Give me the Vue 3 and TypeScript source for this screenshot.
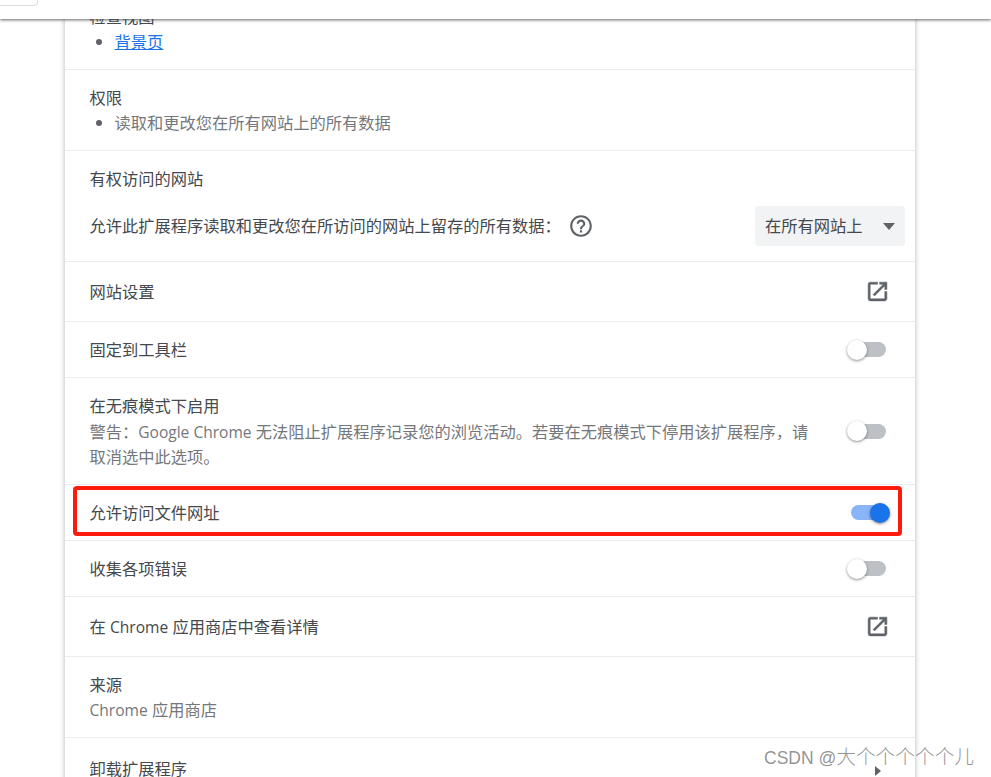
<script setup lang="ts">
interface ToggleRow { label: string; on: boolean }
const pinRow: ToggleRow = { label: '固定到工具栏', on: false }
const fileRow: ToggleRow = { label: '允许访问文件网址', on: true }
const errorRow: ToggleRow = { label: '收集各项错误', on: false }
</script>

<template>
  <div class="page">
    <header class="topbar"><div class="search-stub"></div></header>
    <main class="card">
      <section class="row block first">
        <div class="title">检查视图</div>
        <ul><li><a href="#">背景页</a></li></ul>
      </section>
      <section class="row block perms">
        <div class="title">权限</div>
        <ul><li>读取和更改您在所有网站上的所有数据</li></ul>
      </section>
      <section class="row access">
        <div class="title">有权访问的网站</div>
        <div class="access-line">
          <span class="title grow">允许此扩展程序读取和更改您在所访问的网站上留存的所有数据：</span>
          <svg class="help" viewBox="0 0 24 24">
            <path fill="#5f6368" d="M11 18h2v-2h-2v2zm1-16C6.48 2 2 6.48 2 12s4.48 10 10 10 10-4.48 10-10S17.52 2 12 2zm0 18c-4.41 0-8-3.59-8-8s3.59-8 8-8 8 3.59 8 8-3.59 8-8 8zm0-14c-2.21 0-4 1.79-4 4h2c0-1.1.9-2 2-2s2 .9 2 2c0 2-3 1.75-3 5h2c0-2.25 3-2.5 3-5 0-2.21-1.79-4-4-4z"/>
          </svg>
          <div class="select"><span>在所有网站上</span><i class="caret"></i></div>
        </div>
      </section>
      <section class="row line tall">
        <span class="title">网站设置</span>
        <svg class="ext" viewBox="0 0 24 24">
          <path fill="#5f6368" stroke="#5f6368" stroke-width="0.5" d="M19 19H5V5h7V3H5a2 2 0 0 0-2 2v14a2 2 0 0 0 2 2h14c1.1 0 2-.9 2-2v-7h-2v7zM14 3v2h3.59l-9.83 9.83 1.41 1.41L19 6.41V10h2V3h-7z"/>
        </svg>
      </section>
      <section class="row line">
        <span class="title">{{ pinRow.label }}</span>
        <span class="toggle"><i class="knob"></i></span>
      </section>
      <section class="row incognito">
        <div class="inc-text">
          <div class="title">在无痕模式下启用</div>
          <div class="sub">警告：<span class="latin">Google Chrome</span> 无法阻止扩展程序记录您的浏览活动。若要在无痕模式下停用该扩展程序，请取消选中此选项。</div>
        </div>
        <span class="toggle"><i class="knob"></i></span>
      </section>
      <section class="row line marked">
        <span class="title">{{ fileRow.label }}</span>
        <span class="toggle on"><i class="knob"></i></span>
        <div class="redbox"></div>
      </section>
      <section class="row line">
        <span class="title">{{ errorRow.label }}</span>
        <span class="toggle"><i class="knob"></i></span>
      </section>
      <section class="row line tall">
        <span class="title">在 <span class="latin">Chrome</span> 应用商店中查看详情</span>
        <svg class="ext" viewBox="0 0 24 24">
          <path fill="#5f6368" stroke="#5f6368" stroke-width="0.5" d="M19 19H5V5h7V3H5a2 2 0 0 0-2 2v14a2 2 0 0 0 2 2h14c1.1 0 2-.9 2-2v-7h-2v7zM14 3v2h3.59l-9.83 9.83 1.41 1.41L19 6.41V10h2V3h-7z"/>
        </svg>
      </section>
      <section class="row block perms">
        <div class="title">来源</div>
        <div class="sub"><span class="latin">Chrome</span> 应用商店</div>
      </section>
      <section class="row line tall last">
        <span class="title">卸载扩展程序</span>
        <i class="arrow"></i>
      </section>
    </main>
    <div class="watermark"><span class="wm-latin">CSDN @</span>大个个个个个儿</div>
  </div>
</template>

<style>
html, body { margin: 0; overflow: hidden; background: #fff; }
</style>

<style scoped>
.page {
  position: relative;
  width: 991px;
  height: 777px;
  overflow: hidden;
  background: #fff;
  font-family: "Open Sans", "Noto Sans CJK SC", sans-serif;
  font-size: 16.25px;
  line-height: 25px;
  color: #45484c;
}
.latin { font-size: 15.55px; }
.topbar {
  position: absolute;
  z-index: 3;
  top: 0;
  left: 0;
  right: 0;
  height: 19px;
  background: #fff;
  box-shadow: 0 1px 3px rgba(50, 50, 50, 0.75);
}
.search-stub {
  width: 37px;
  height: 5px;
  border: 1px solid #dadce0;
  border-top: 0;
  border-left: 0;
  border-radius: 0 0 4px 0;
}
.card {
  width: 850px;
  margin: -2px 0 0 65px;
  background: #fff;
  box-shadow: 0 0 5px rgba(60, 64, 67, 0.4);
}
.row {
  position: relative;
  box-sizing: border-box;
  padding: 0 25px 0 24.5px;
  border-bottom: 1px solid #eaebed;
}
.block { padding-top: 16px; padding-bottom: 14px; height: 81px; }
.first { height: 72px; padding-top: 7px; }
.title { color: #45484c; }
.sub, li { color: #74777b; }
ul { margin: -1px 0 0; padding: 0 0 0 25px; }
li::marker { color: #5f6368; font-size: 18px; }
a { color: #1a73e8; text-decoration: underline; }
.access { height: 111px; padding-top: 16px; }
.access-line {
  display: flex;
  align-items: center;
  margin-top: 12px;
  height: 44px;
}
.help { flex: none; width: 26px; height: 26px; margin-left: 7px; }
.grow { flex: none; }
.select {
  display: flex;
  align-items: center;
  justify-content: space-between;
  box-sizing: border-box;
  width: 150px;
  height: 40px;
  margin-left: auto;
  margin-right: -15px;
  padding: 0 10px;
  border-radius: 4px;
  background: #f1f3f4;
}
.caret {
  width: 0;
  height: 0;
  border-left: 6px solid transparent;
  border-right: 6px solid transparent;
  border-top: 7px solid #5f6368;
}
.line {
  display: flex;
  align-items: center;
  justify-content: space-between;
  height: 56px;
}
.line > .title { padding-top: 2px; }
.tall { height: 60px; }
.ext { flex: none; width: 25px; height: 25px; margin-bottom: 1px; }
.incognito {
  display: flex;
  justify-content: space-between;
  align-items: center;
  height: 107px;
}
.inc-text { width: 725px; padding-top: 1px; }
.incognito .sub { margin-top: 1px; }
.toggle {
  position: relative;
  flex: none;
  display: block;
  width: 29px;
  height: 15px;
  margin-right: 4px;
  border-radius: 8px;
  background: #bdc1c6;
}
.knob {
  position: absolute;
  top: -2.5px;
  left: -10px;
  width: 20px;
  height: 20px;
  border-radius: 50%;
  background: #fff;
  box-shadow: 0 1px 3px rgba(0, 0, 0, 0.45);
}
.toggle.on { width: 35px; background: #8ab4f8; }
.toggle.on .knob { left: auto; right: -3.5px; background: #1a73e8; }
.redbox {
  position: absolute;
  left: 8px;
  right: 13px;
  top: 1px;
  bottom: 4px;
  border: 4px solid #ff1a0e;
  border-radius: 4px;
  pointer-events: none;
}
.last { border-bottom: 0; }
.arrow {
  width: 0;
  height: 0;
  margin-right: 9px;
  margin-top: 6px;
  border-top: 5px solid transparent;
  border-bottom: 5px solid transparent;
  border-left: 6px solid #5f6368;
}
.watermark {
  position: absolute;
  z-index: 2;
  left: 764px;
  top: 745px;
  font-family: "Liberation Sans", "Noto Sans CJK SC", sans-serif;
  font-size: 19.7px;
  font-weight: 300;
  color: rgba(120, 120, 120, 0.8);
  white-space: nowrap;
}
.wm-latin { font-size: 17.5px; }
</style>
